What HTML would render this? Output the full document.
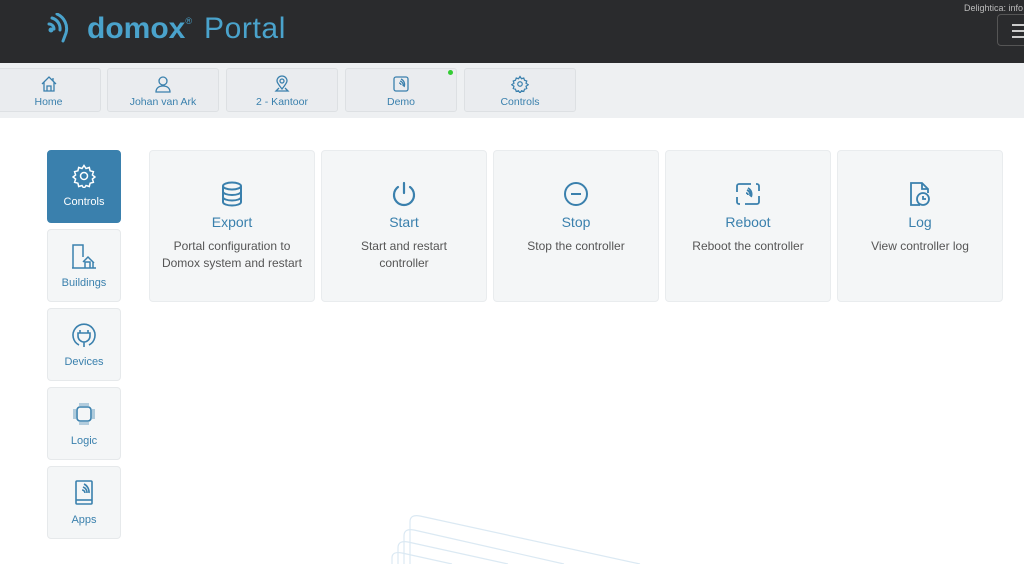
<!DOCTYPE html>
<html><head><meta charset="utf-8"><style>
*{box-sizing:border-box;margin:0;padding:0}
body{width:1024px;height:564px;overflow:hidden;background:#fff;font-family:"Liberation Sans",sans-serif;position:relative}
.hdr{position:absolute;left:0;top:0;width:1024px;height:63px;background:#2a2b2d}
.logo{position:absolute;left:87px;top:12px;font-size:30px;color:#4aa3cc;white-space:nowrap}
.logo b{font-weight:bold;letter-spacing:0px}
.logo sup{font-size:9px;vertical-align:top;position:relative;top:4px;margin-right:12px}
.logo span{letter-spacing:0.6px}
.who{position:absolute;right:1px;top:3px;font-size:9px;color:#bbb}
.burger{position:absolute;left:997px;top:14px;width:40px;height:32px;border:1px solid #555;border-radius:4px}
.burger i{position:absolute;left:14px;width:16px;height:2px;background:#ccc}
.nav{position:absolute;top:63px;left:0;width:1024px;height:55px;background:#eef0f2}
.tab{position:absolute;top:5px;height:44px;background:#eaecef;border:1px solid #dde0e3;border-radius:3px;text-align:center;color:#3a80ad;font-size:10.5px}
.tab svg{display:block;margin:6px auto 3px}
.side{position:absolute;left:47px;width:74px;height:73px;background:#f4f6f7;border:1px solid #e6e9eb;border-radius:4px;text-align:center;color:#3a80ad;font-size:11px}
.side svg{display:block;margin:13px auto 8px}
.side.act{background:#3a80ad;color:#fff;border-color:#3a80ad}
.card{position:absolute;top:150px;width:166px;height:152px;background:#f4f6f7;border:1px solid #e9ecee;border-radius:4px;text-align:center}
.card svg{display:block;margin:30px auto 7px}
.card h3{font-weight:normal;font-size:14px;color:#3a80ad;margin-bottom:8px}
.card p{font-size:12px;color:#555;line-height:17px}
</style></head><body>
<div class="hdr">
<svg style="position:absolute;left:46px;top:13px" width="26" height="30" viewBox="0 0 26 30" fill="none" stroke="#4aa3cc" stroke-width="3" stroke-linecap="round"><path d="M3 11a5 5 0 0 1 5 5"/><path d="M6 5a11 11 0 0 1 8 12"/><path d="M11 1a16 16 0 0 1 9 19l-3 8"/><circle cx="5" cy="17" r="1" fill="#4aa3cc"/></svg>
<div class="logo"><b>domox</b><sup>®</sup><span>Portal</span></div>
<div class="who">Delightica: info</div>
<div class="burger"><i style="top:9px"></i><i style="top:15px"></i><i style="top:21px"></i></div>
</div>
<div class="nav">
<div class="tab" style="left:-4px;width:105px"><svg width="18" height="18" viewBox="0 0 18 18" fill="none" stroke="#3a80ad" stroke-width="1.3"><path d="M2 9L9 2l7 7M4 7v9h10V7M7 16v-5h4v5M13 3v3"/></svg>Home</div>
<div class="tab" style="left:107px;width:112px"><svg width="18" height="18" viewBox="0 0 18 18" fill="none" stroke="#3a80ad" stroke-width="1.3"><circle cx="9" cy="6" r="4"/><path d="M2 17c0-4 3-6 7-6s7 2 7 6z"/></svg>Johan van Ark</div>
<div class="tab" style="left:226px;width:112px"><svg width="18" height="18" viewBox="0 0 18 18" fill="none" stroke="#3a80ad" stroke-width="1.3"><path d="M9 14C5 9 4 7 4 6a5 5 0 0 1 10 0c0 1-1 3-5 8z"/><circle cx="9" cy="6" r="2"/><path d="M6 13l-3 3h12l-3-3"/></svg>2 - Kantoor</div>
<div class="tab" style="left:345px;width:112px"><svg width="18" height="18" viewBox="0 0 18 18" fill="none" stroke="#3a80ad" stroke-width="1.3"><rect x="2" y="2" width="14" height="14" rx="2"/><path d="M7 8a2 2 0 0 1 2 2M8 6a4 4 0 0 1 3 5M9 4a6 6 0 0 1 3 8"/></svg>Demo<span style="position:absolute;right:3px;top:1px;width:5px;height:5px;border-radius:50%;background:#3c3"></span></div>
<div class="tab" style="left:464px;width:112px"><svg width="18" height="18" viewBox="0 0 24 24" fill="none" stroke="#3a80ad" stroke-width="1.6"><circle cx="12" cy="12" r="3"/><path d="M12 2l2 3 3-1 1 3 3 1-1 3 3 2-3 2 1 3-3 1-1 3-3-1-2 3-2-3-3 1-1-3-3-1 1-3-3-2 3-2-1-3 3-1 1-3 3 1z"/></svg>Controls</div>
</div>
<div class="side act" style="top:150px"><svg width="24" height="24" viewBox="0 0 24 24" fill="none" stroke="#fff" stroke-width="1.5"><circle cx="12" cy="12" r="3.5"/><path d="M12 1.5l2 3 3.3-1 .8 3.3 3.3.9-1 3.3 2.6 2-2.6 2 1 3.3-3.3.9-.8 3.3-3.3-1-2 3-2-3-3.3 1-.8-3.3-3.3-.9 1-3.3-2.6-2 2.6-2-1-3.3 3.3-.9.8-3.3 3.3 1z"/></svg>Controls</div>
<div class="side" style="top:229px"><svg width="26" height="26" viewBox="0 0 26 26" fill="none" stroke="#3a80ad" stroke-width="1.5"><path d="M2 25V2h10v12M1 25h24M14 25v-6h5v6M12 19l5-5 6 6M22 19v6"/></svg>Buildings</div>
<div class="side" style="top:308px"><svg width="26" height="26" viewBox="0 0 26 26" fill="none" stroke="#3a80ad" stroke-width="1.6"><path d="M8 23A11 11 0 1 1 18 23"/><path d="M9 8v3M17 8v3M7 11h12v3a6 6 0 0 1-12 0zM13 20v5"/></svg>Devices</div>
<div class="side" style="top:387px"><svg width="26" height="26" viewBox="0 0 26 26" fill="none" stroke="#3a80ad" stroke-width="1.6"><rect x="6" y="6" width="14" height="14" rx="3"/><path stroke-width="0.7" d="M9 2v3M11 2v3M13 2v3M15 2v3M17 2v3M9 21v3M11 21v3M13 21v3M15 21v3M17 21v3M2 9h3M2 11h3M2 13h3M2 15h3M2 17h3M21 9h3M21 11h3M21 13h3M21 15h3M21 17h3"/></svg>Logic</div>
<div class="side" style="top:466px"><svg width="26" height="26" viewBox="0 0 26 26" fill="none" stroke="#3a80ad" stroke-width="1.6"><rect x="5" y="1" width="16" height="23" rx="1"/><path d="M5 20h16"/><path d="M11 10a3 3 0 0 1 3 3M12 7a6 6 0 0 1 4 6M13 4a9 9 0 0 1 5 9"/></svg>Apps</div>

<div class="card" style="left:149px"><svg width="24" height="26" viewBox="0 0 24 26" fill="none" stroke="#3a80ad" stroke-width="2"><ellipse cx="12" cy="5" rx="9" ry="3.5"/><path d="M3 5v16c0 2 4 3.5 9 3.5s9-1.5 9-3.5V5M3 10.5c0 2 4 3.5 9 3.5s9-1.5 9-3.5M3 16c0 2 4 3.5 9 3.5s9-1.5 9-3.5"/></svg><h3>Export</h3><p>Portal configuration to<br>Domox system and restart</p></div>
<div class="card" style="left:321px"><svg width="26" height="26" viewBox="0 0 26 26" fill="none" stroke="#3a80ad" stroke-width="2.2" stroke-linecap="round"><path d="M7 6a10 10 0 1 0 12 0M13 2v10"/></svg><h3>Start</h3><p>Start and restart<br>controller</p></div>
<div class="card" style="left:493px"><svg width="26" height="26" viewBox="0 0 26 26" fill="none" stroke="#3a80ad" stroke-width="2"><circle cx="13" cy="13" r="11"/><path d="M8 13h10"/></svg><h3>Stop</h3><p>Stop the controller</p></div>
<div class="card" style="left:665px"><svg width="26" height="26" viewBox="0 0 26 26" fill="none" stroke="#3a80ad" stroke-width="1.8"><path d="M9 3H4a2 2 0 0 0-2 2v6M17 23h5a2 2 0 0 0 2-2v-6M2 16v5a2 2 0 0 0 2 2h1M24 10V5a2 2 0 0 0-2-2h-1M9 3h7M17 23h-7"/><path d="M11 12a2 2 0 0 1 2 2M12 9a5 5 0 0 1 3 6M13 7a7 7 0 0 1 3 9"/></svg><h3>Reboot</h3><p>Reboot the controller</p></div>
<div class="card" style="left:837px"><svg width="24" height="26" viewBox="0 0 24 26" fill="none" stroke="#3a80ad" stroke-width="1.8"><path d="M12 24H3V2h11l6 6v4M14 2v6h6"/><circle cx="15" cy="18" r="6"/><path d="M15 15v3h3"/></svg><h3>Log</h3><p>View controller log</p></div>

<svg style="position:absolute;left:380px;top:510px" width="300" height="54" viewBox="0 0 300 54" fill="none" stroke="#dbe9f3" stroke-width="1.2"><path d="M30 54V12q0-8 10-6l220 48"/><path d="M24 54V26q0-8 10-6l150 34"/><path d="M18 54V38q0-8 10-6l100 22"/><path d="M12 54v-6q0-7 10-5l50 11"/></svg>
</body></html>
